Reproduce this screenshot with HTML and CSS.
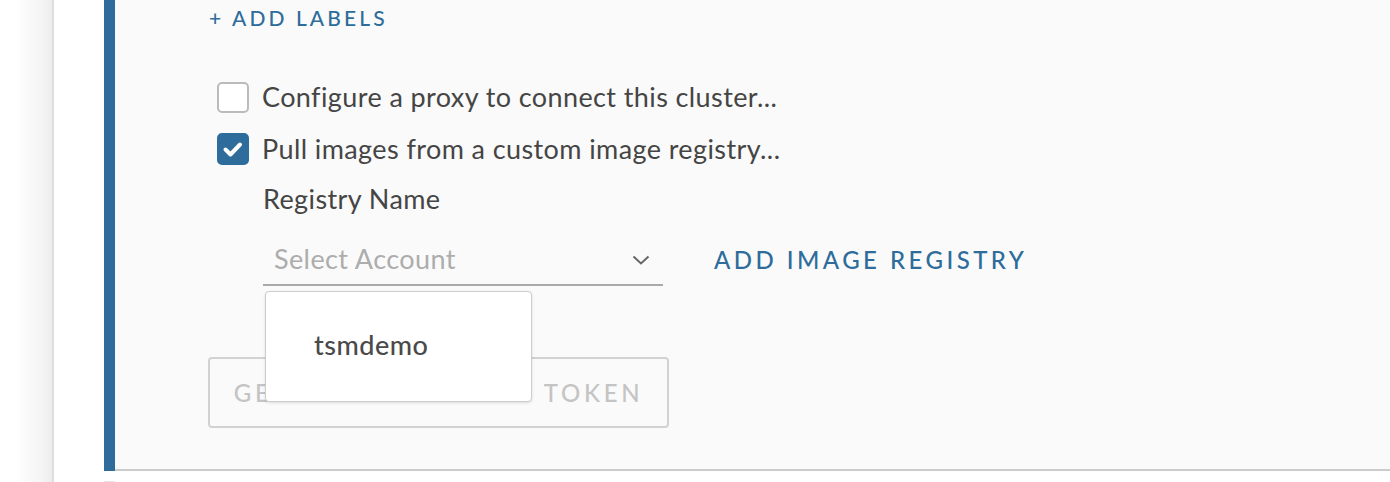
FILE: index.html
```html
<!DOCTYPE html>
<html>
<head>
<meta charset="utf-8">
<link rel="stylesheet" href="styles.css">
</head>
<body>
<div class="page">
  <div class="shade"></div>
  <div class="rule"></div>
  <div class="main">
    <div class="card">
      <div class="stripe"></div>
      <div class="panel">
        <a class="link add-labels">+ ADD LABELS</a>
        <div class="options">
          <label class="check">
            <span class="box"></span>
            <span class="check-text">Configure a proxy to connect this cluster...</span>
          </label>
          <label class="check">
            <span class="box checked">
              <svg viewBox="0 0 32 32" width="32" height="32"><path d="M8.5 16.5 L13.5 21.5 L23 11.5" fill="none" stroke="#fff" stroke-width="4" stroke-linecap="round" stroke-linejoin="round"/></svg>
            </span>
            <span class="check-text">Pull images from a custom image registry...</span>
          </label>
        </div>
        <div class="registry">
          <div class="field-label">Registry Name</div>
          <div class="field-row">
            <div class="select-wrap">
              <div class="select">
                <span class="placeholder">Select Account</span>
                <svg class="chevron" viewBox="0 0 18 10" width="18" height="10"><path d="M1.5 1.5 L9 8.5 L16.5 1.5" fill="none" stroke="#666" stroke-width="2"/></svg>
              </div>
              <div class="menu">
                <div class="menu-item">tsmdemo</div>
              </div>
            </div>
            <a class="link add-registry">ADD IMAGE REGISTRY</a>
          </div>
        </div>
        <button class="btn">GENERATE SECURITY TOKEN</button>
      </div>
    </div>
    <div class="next"></div>
  </div>
</div>
</body>
</html>
```
FILE: styles.css
```css
* { box-sizing: border-box; }
html, body {
  margin: 0;
  padding: 0;
  background: #fff;
  font-family: Lato, "Open Sans", sans-serif;
  color: #454545;
}
.page {
  display: flex;
  height: 482px;
  overflow: hidden;
}
.shade {
  width: 52px;
  flex: none;
  background: linear-gradient(to right, #fff 30%, #f3f3f3 85%, #ececec 100%);
}
.rule {
  width: 2px;
  flex: none;
  background: #dedede;
}
.main {
  flex: 1;
  padding-left: 50px;
  display: flex;
  flex-direction: column;
}
.card {
  display: flex;
  height: 471px;
}
.stripe {
  width: 11px;
  flex: none;
  background: #2e6c9b;
}
.panel {
  flex: 1;
  background: #fafafa;
  border-bottom: 2px solid #cccccc;
  padding: 6px 0 0 93px;
  display: flex;
  flex-direction: column;
  align-items: flex-start;
}
.link {
  color: #2e6c9b;
  font-weight: 500;
  text-decoration: none;
  cursor: pointer;
}
.add-labels {
  font-size: 21px;
  line-height: 24px;
  letter-spacing: 3.1px;
  margin-left: 1px;
}
.options {
  margin: 51px 0 0 9px;
  display: flex;
  flex-direction: column;
  gap: 20px;
}
.check {
  display: flex;
  align-items: center;
  gap: 13px;
  height: 32px;
  font-size: 27px;
  line-height: 32px;
  letter-spacing: 0.4px;
}
.box {
  width: 32px;
  height: 31px;
  border: 2px solid #bbbbbb;
  border-radius: 5px;
  background: #fff;
  display: flex;
  align-items: center;
  justify-content: center;
}
.box.checked {
  background: #2e6c9b;
  border-color: #2e6c9b;
  height: 32px;
}
.box.checked svg { display: block; flex: none; }
.registry {
  margin: 18px 0 0 55px;
}
.field-label {
  font-size: 27px;
  line-height: 32px;
  letter-spacing: 0.4px;
}
.field-row {
  margin-top: 28px;
  display: flex;
  align-items: baseline;
  gap: 51px;
}
.select-wrap {
  position: relative;
  width: 400px;
}
.select {
  display: flex;
  align-items: center;
  justify-content: space-between;
  padding: 0 13px 9px 11px;
  border-bottom: 2px solid #a9a9a9;
  font-size: 27px;
  line-height: 32px;
  letter-spacing: 0.4px;
}
.placeholder { color: #adadad; }
.chevron { display: block; margin-top: 1px; }
.menu {
  position: absolute;
  left: 2px;
  top: 48px;
  width: 267px;
  height: 111px;
  background: #fff;
  border: 1px solid #cdcdcd;
  border-radius: 4px;
  box-shadow: 0 1px 3px rgba(0,0,0,0.12);
  padding: 37px 0 0 48px;
  z-index: 2;
}
.menu-item {
  font-size: 27px;
  line-height: 32px;
  font-weight: 500;
  letter-spacing: 0.5px;
  color: #4a4a4a;
}
.add-registry {
  font-size: 24px;
  line-height: 32px;
  letter-spacing: 3.45px;
}
.btn {
  margin-top: 71px;
  width: 461px;
  height: 71px;
  border: 2px solid #d2d2d2;
  border-radius: 4px;
  background: transparent;
  font-family: Lato, "Open Sans", sans-serif;
  font-size: 24px;
  font-weight: 500;
  letter-spacing: 3.7px;
  color: #c4c4c4;
  padding: 0;
}
.next {
  margin-top: 10px;
  width: 11px;
  height: 1px;
  background: #e6e6e6;
}
```
